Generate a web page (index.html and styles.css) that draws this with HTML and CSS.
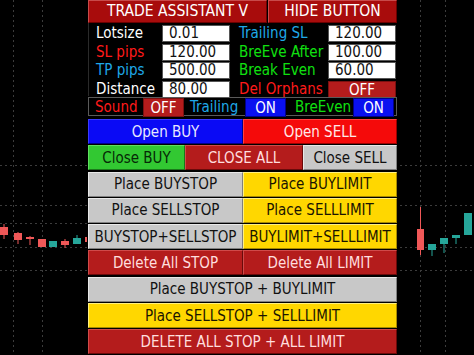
FILE: index.html
```html
<!DOCTYPE html>
<html>
<head>
<meta charset="utf-8">
<link rel="stylesheet" href="styles.css">
</head>
<body>
<div class="screen">
  <svg class="chart" width="474" height="355" viewBox="0 0 474 355">
    <g stroke="#3c3c3c" stroke-width="1" stroke-dasharray="2 3">
      <line x1="13.5" y1="0" x2="13.5" y2="355"/>
      <line x1="42.5" y1="0" x2="42.5" y2="355"/>
      <line x1="420.5" y1="0" x2="420.5" y2="355"/>
      <line x1="445.5" y1="0" x2="445.5" y2="355"/>
      <line x1="0" y1="165.5" x2="474" y2="165.5"/>
      <line x1="0" y1="205.5" x2="474" y2="205.5"/>
      <line x1="0" y1="223.5" x2="90" y2="223.5"/>
      <line x1="0" y1="247.5" x2="474" y2="247.5"/>
      <line x1="0" y1="270.5" x2="474" y2="270.5"/>
    </g>
    <g>
      <line x1="4" y1="224" x2="4" y2="239" stroke="#f05858"/>
      <rect x="0" y="227" width="8" height="8" fill="#f05858"/>
      <line x1="18" y1="232" x2="18" y2="244" stroke="#f05858"/>
      <rect x="14" y="233" width="8" height="7" fill="#f05858"/>
      <line x1="30" y1="236" x2="30" y2="245" stroke="#f05858"/>
      <rect x="26" y="237" width="8" height="2" fill="#f05858"/>
      <rect x="38" y="239" width="8" height="8" fill="#f05858"/>
      <rect x="49" y="241" width="8" height="6" fill="#26a69a"/>
      <line x1="65" y1="239" x2="65" y2="248" stroke="#f05858"/>
      <rect x="61" y="241" width="8" height="4" fill="#f05858"/>
      <line x1="77" y1="235" x2="77" y2="244" stroke="#26a69a"/>
      <rect x="73" y="238" width="8" height="6" fill="#26a69a"/>
      <rect x="85" y="237" width="2" height="5" fill="#f05858"/>

      <line x1="420.5" y1="207" x2="420.5" y2="255" stroke="#f05858"/>
      <rect x="417" y="229" width="7" height="21" fill="#f05858"/>
      <line x1="432" y1="244" x2="432" y2="256" stroke="#26a69a"/>
      <rect x="428" y="244" width="8" height="6" fill="#26a69a"/>
      <line x1="444" y1="238" x2="444" y2="253" stroke="#26a69a"/>
      <rect x="440" y="238" width="8" height="6" fill="#26a69a"/>
      <line x1="456" y1="235" x2="456" y2="244" stroke="#26a69a"/>
      <rect x="452" y="235" width="8" height="3" fill="#26a69a"/>
      <rect x="464" y="213" width="8" height="22" fill="#26a69a"/>
    </g>
  </svg>

  <div class="panel">
    <div class="title-row">
      <div class="tbtn main">TRADE ASSISTANT V</div>
      <div class="tbtn hide">HIDE BUTTON</div>
    </div>

    <div class="settings">
      <span class="lbl white">Lotsize</span><span class="inp">0.01</span>
      <span class="lbl blue right">Trailing SL</span><span class="inp">120.00</span>
      <span class="lbl red">SL pips</span><span class="inp">120.00</span>
      <span class="lbl green right">BreEve After</span><span class="inp">100.00</span>
      <span class="lbl blue">TP pips</span><span class="inp">500.00</span>
      <span class="lbl green right">Break Even</span><span class="inp">60.00</span>
      <span class="lbl white">Distance</span><span class="inp">80.00</span>
      <span class="lbl red right">Del Orphans</span><span class="tog off">OFF</span>
    </div>

    <div class="toggles">
      <span class="lbl red">Sound</span><span class="tog off">OFF</span>
      <span class="lbl blue pad">Trailing</span><span class="tog on">ON</span>
      <span class="lbl green pad2">BreEven</span><span class="tog on">ON</span>
    </div>

    <div class="buttons">
      <div class="row two">
        <div class="btn blue-b">Open BUY</div>
        <div class="btn red-b">Open SELL</div>
      </div>
      <div class="row three">
        <div class="btn green-b">Close BUY</div>
        <div class="btn dark-b">CLOSE ALL</div>
        <div class="btn gray-b">Close SELL</div>
      </div>
      <div class="row two">
        <div class="btn gray-b">Place BUYSTOP</div>
        <div class="btn yellow-b">Place BUYLIMIT</div>
      </div>
      <div class="row two">
        <div class="btn gray-b">Place SELLSTOP</div>
        <div class="btn yellow-b">Place SELLLIMIT</div>
      </div>
      <div class="row two">
        <div class="btn gray-b">BUYSTOP+SELLSTOP</div>
        <div class="btn yellow-b">BUYLIMIT+SELLLIMIT</div>
      </div>
      <div class="row two">
        <div class="btn dark-b">Delete All STOP</div>
        <div class="btn dark-b">Delete All LIMIT</div>
      </div>
      <div class="row one">
        <div class="btn gray-b">Place BUYSTOP + BUYLIMIT</div>
      </div>
      <div class="row one">
        <div class="btn yellow-b">Place SELLSTOP + SELLLIMIT</div>
      </div>
      <div class="row one">
        <div class="btn dark-b">DELETE ALL STOP + ALL LIMIT</div>
      </div>
    </div>
  </div>
</div>
</body>
</html>
```

FILE: styles.css
```css
* { box-sizing: border-box; }
html, body { margin: 0; padding: 0; background: #000; }
body {
  font-family: "DejaVu Sans", Verdana, sans-serif;
  font-stretch: condensed;
  font-size: 15px;
}
.screen {
  position: relative;
  width: 474px;
  height: 355px;
  overflow: hidden;
  background: #000;
}
.chart { position: absolute; left: 0; top: 0; }

.panel {
  position: relative;
  margin-left: 88px;
  width: 309px;
  display: flex;
  flex-direction: column;
}

.title-row {
  display: flex;
  height: 23px;
  gap: 1px;
}
.tbtn {
  background: #a80c0c;
  color: #fff;
  border: 1px solid #c84a4a;
  border-bottom-color: #6a0000;
  border-right-color: #6a0000;
  display: flex;
  align-items: center;
  justify-content: center;
  line-height: 1;
  padding-top: 1px;
  font-size: 15.5px;
}
.tbtn.main { width: 179px; }
.tbtn.hide { width: 129px; }

.settings {
  display: grid;
  grid-template-columns: 66px 68px 98px 68px;
  grid-auto-rows: 17px;
  row-gap: 1.5px;
  padding: 2px 0 0 7px;
  height: 73px;
  background: #000;
  border-left: 1px solid #2a2a2a;
}
.lbl {
  display: flex;
  align-items: center;
  white-space: nowrap;
  line-height: 1;
}
.lbl.right { padding-left: 9px; }
.white { color: #ffffff; }
.red { color: #ff1a1a; }
.blue { color: #1fa8e8; }
.green { color: #10e010; }

.inp {
  background: #fff;
  color: #111;
  border: 1px solid #555;
  display: flex;
  align-items: center;
  padding-left: 6px;
  line-height: 1;
}
.tog {
  display: flex;
  align-items: center;
  justify-content: center;
  color: #fff;
  line-height: 1;
  padding-top: 2px;
}
.tog.off { background: #b41c1c; border: 1px solid #7a1010; }
.tog.on { background: #0a10f0; border: 1px solid #00008a; }

.toggles {
  display: grid;
  grid-template-columns: 48px 41px 61px 41px 67px 41px;
  height: 19px;
  padding-left: 6px;
  border: 1px solid #5a5a5a;
  margin-top: 1px;
}
.lbl.pad { padding-left: 6px; }
.lbl.pad2 { padding-left: 9px; }

.buttons {
  margin-top: 3px;
  display: flex;
  flex-direction: column;
  gap: 1.3px;
}
.row { display: grid; height: 25px; }
.row.two { grid-template-columns: 155px 154px; }
.row.three { grid-template-columns: 97px 118px 94px; }
.row.one { grid-template-columns: 309px; }

.btn {
  display: flex;
  align-items: center;
  justify-content: center;
  white-space: nowrap;
  line-height: 1;
  padding-top: 1px;
  border: 1px solid;
}
.blue-b { background: #0a0af5; color: #e8e8ff; border-color: #3a3aff #00008a #00008a #3a3aff; }
.red-b { background: #f50a0a; color: #ffe8e8; border-color: #ff4040 #9a0000 #9a0000 #ff4040; }
.green-b { background: #32c832; color: #062806; border-color: #60e060 #1a7a1a #1a7a1a #60e060; }
.dark-b { background: #b41c1c; color: #ffdede; border-color: #d04a4a #6a0a0a #6a0a0a #d04a4a; }
.gray-b { background: #c8c8c8; color: #111; border-color: #e8e8e8 #808080 #808080 #e8e8e8; }
.yellow-b { background: #ffd700; color: #1a1400; border-color: #fff080 #a88a00 #a88a00 #fff080; }
```
